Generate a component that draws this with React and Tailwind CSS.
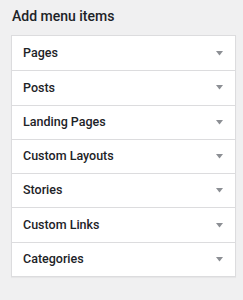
export default function App() {
  const items = ["Pages", "Posts", "Landing Pages", "Custom Layouts", "Stories", "Custom Links", "Categories"];
  return (
    <div className="w-[243px] h-[300px] bg-[#f0f0f1] pt-[7px]" style={{ fontFamily: "Roboto, 'Noto Sans', sans-serif" }}>
      <h2 className="ml-[12px] text-[14px] leading-[18px] font-medium text-[#1d2327]">Add menu items</h2>
      <div className="ml-[11px] mt-[10px] w-[225px] bg-white border border-[#dcdcde] shadow-[0_1px_1px_rgba(0,0,0,0.04)]">
        {items.map((t, i) => (
          <div
            key={t}
            className={`flex items-center justify-between h-[34.3px] pl-[11px] pr-[12px] ${i > 0 ? "border-t border-[#dcdcde]" : ""}`}
          >
            <span className="text-[12.5px] font-medium text-[#1d2327]">{t}</span>
            <svg width="7" height="5" viewBox="0 0 7 5">
              <path d="M0 0 L7 0 L3.5 4.5 Z" fill="#8c8f94" />
            </svg>
          </div>
        ))}
      </div>
    </div>
  );
}
